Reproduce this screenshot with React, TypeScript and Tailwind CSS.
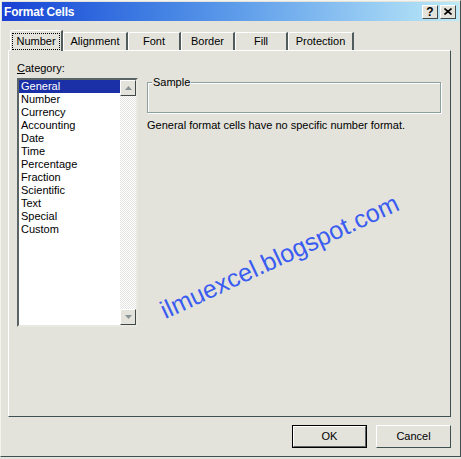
import React from 'react';

const tabs = [
  { label: 'Number', w: 'w-[53px]' },
  { label: 'Alignment', w: 'w-[65px]' },
  { label: 'Font', w: 'w-[53px]' },
  { label: 'Border', w: 'w-[54px]' },
  { label: 'Fill', w: 'w-[53px]' },
  { label: 'Protection', w: 'w-[66px]' },
];

const categories = [
  'General',
  'Number',
  'Currency',
  'Accounting',
  'Date',
  'Time',
  'Percentage',
  'Fraction',
  'Scientific',
  'Text',
  'Special',
  'Custom',
];

const ScrollButton: React.FC<{ up?: boolean }> = ({ up }) => (
  <div className="w-[16px] h-[16px] bg-[#e3e3db] border border-t-white border-l-white border-r-[#404848] border-b-[#404848] flex items-center justify-center">
    <svg width="7" height="4" viewBox="0 0 7 4">
      {up ? <path d="M0 4 L3.5 0 L7 4 Z" fill="#8a9494" /> : <path d="M0 0 L3.5 4 L7 0 Z" fill="#8a9494" />}
    </svg>
  </div>
);

const App: React.FC = () => {
  return (
    <div
      className="relative w-[461px] h-[459px] bg-[#e3e3db] text-[11px] text-black overflow-hidden"
      style={{ fontFamily: '"Liberation Sans", Arial, sans-serif' }}
    >
      <div className="h-[457px] border border-t-[#f4f4ee] border-l-[#f4f4ee] border-r-[#3f5050] border-b-[#3f5050] p-[1px] flex flex-col">
        {/* title bar */}
        <div className="h-[19px] flex items-center justify-between bg-gradient-to-r from-[#1a3fd4] via-[#5b9ae9] to-[#bdeaf7] pl-[2px] pr-[3px]">
          <span className="text-white font-bold text-[12px] tracking-[-0.2px]">Format Cells</span>
          <div className="flex gap-[2px]">
            <div className="w-[16px] h-[14px] bg-[#e3e3db] border border-t-white border-l-white border-r-[#404848] border-b-[#404848] flex items-center justify-center font-bold text-[12px] leading-none">?</div>
            <div className="w-[16px] h-[14px] bg-[#e3e3db] border border-t-white border-l-white border-r-[#404848] border-b-[#404848] flex items-center justify-center">
              <svg width="8" height="7" viewBox="0 0 8 7">
                <path d="M0.5 0.5 L7.5 6.5 M7.5 0.5 L0.5 6.5" stroke="#000" strokeWidth="1.6" />
              </svg>
            </div>
          </div>
        </div>

        {/* tabs */}
        <div className="mt-[8px] ml-[8px] flex items-end h-[21px]">
          {tabs.map((t, i) => (
            <div
              key={t.label}
              className={`${t.w} ${i === 0 ? 'h-[21px] z-10 -mb-[1px] bg-[#e3e3db]' : 'h-[18px]'} border-t border-l border-t-white border-l-white border-r-2 border-r-[#505c5c] rounded-tl-[2px] flex items-center justify-center`}
            >
              {i === 0 ? (
                <span className="px-[3px] py-[1px] border border-dotted border-black leading-[13px]">{t.label}</span>
              ) : (
                <span className="leading-[13px]">{t.label}</span>
              )}
            </div>
          ))}
        </div>

        {/* panel */}
        <div className="ml-[6px] w-[443px] h-[367px] border border-t-white border-l-white border-r-[#3f5050] border-b-[#3f5050] pl-[8px] pt-[11px] flex gap-[9px]">
          <div className="flex flex-col">
            <div className="leading-[13px] mb-[3px]">
              <span className="underline">C</span>ategory:
            </div>
            <div className="w-[121px] h-[249px] border-2 border-t-[#5b6464] border-l-[#5b6464] border-r-[#e9e9e3] border-b-[#e9e9e3] bg-white flex">
              <div className="flex-1 flex flex-col">
                {categories.map((c, i) => (
                  <div
                    key={c}
                    className={`h-[13px] leading-[13px] pl-[2px] ${i === 0 ? 'bg-[#1b2fa6] text-white' : ''}`}
                  >
                    {c}
                  </div>
                ))}
              </div>
              <div className="w-[16px] flex flex-col justify-between bg-[repeating-conic-gradient(#ffffff_0_25%,#e6e6e0_0_50%)] bg-size-[2px_2px]">
                <ScrollButton up />
                <ScrollButton />
              </div>
            </div>
          </div>

          <div className="flex flex-col pt-[20px]">
            <div className="relative w-[294px] h-[31px] border border-[#8da0a0] shadow-[inset_1px_1px_0_#ffffff,1px_1px_0_#ffffff]">
              <span className="absolute -top-[7px] left-[4px] px-[1px] bg-[#e3e3db] leading-[13px]">Sample</span>
            </div>
            <div className="mt-[6px] leading-[13px]">General format cells have no specific number format.</div>
          </div>
        </div>

        {/* buttons */}
        <div className="flex justify-end gap-[9px] pr-[8px] mt-[8px]">
          <div className="w-[75px] h-[23px] border border-black flex">
            <div className="flex-1 border border-t-white border-l-white border-r-[#5b6464] border-b-[#5b6464] flex items-center justify-center">OK</div>
          </div>
          <div className="w-[75px] h-[23px] border border-t-white border-l-white border-r-[#3f5050] border-b-[#3f5050] flex items-center justify-center">Cancel</div>
        </div>
      </div>

      {/* watermark */}
      <span
        className="absolute left-[167px] top-[298px] origin-bottom-left -rotate-[25deg] text-[25px] leading-[25px] text-[#3a5cf0] whitespace-nowrap"
        style={{ fontFamily: '"Liberation Sans", Arial, sans-serif' }}
      >
        ilmuexcel.blogspot.com
      </span>
    </div>
  );
};

export default App;
